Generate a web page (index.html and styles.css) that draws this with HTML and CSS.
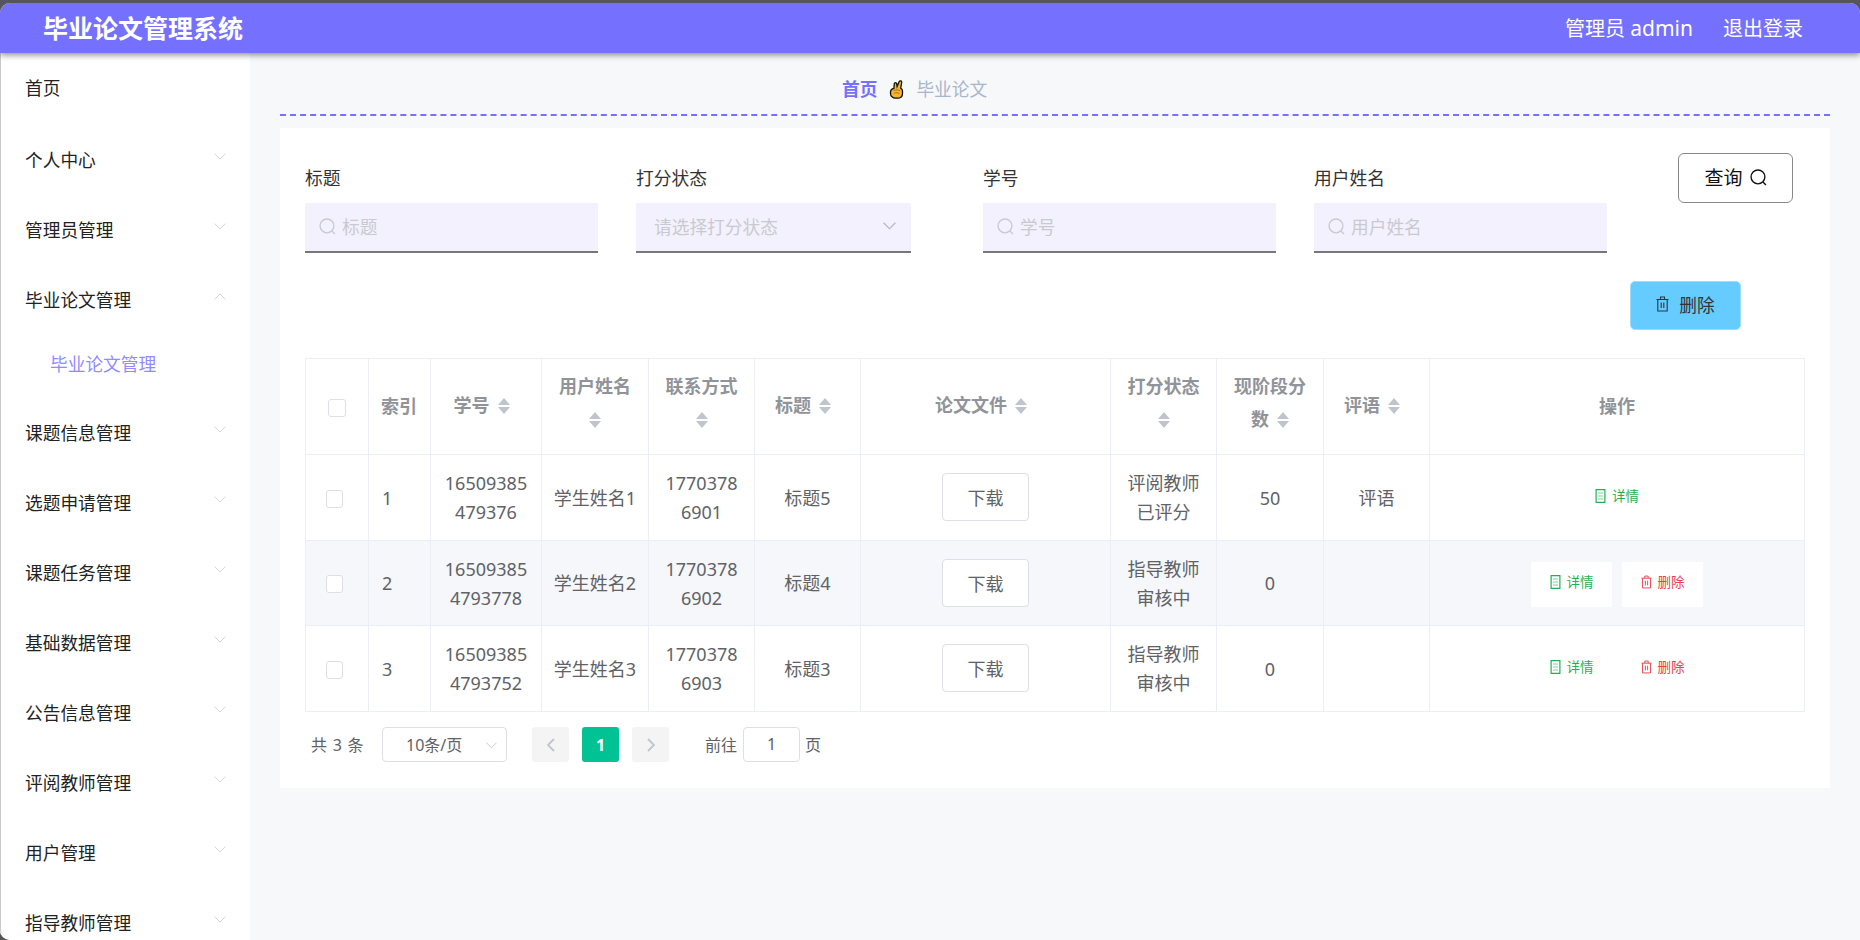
FILE: index.html
```html
<!DOCTYPE html>
<html lang="zh-CN">

<head>
    <meta charset="UTF-8">
    <title>毕业论文管理系统</title>
    <link rel="stylesheet" href="styles.css">
</head>

<body>
    <!-- shared icons -->
    <svg class="icon-defs" aria-hidden="true">
        <symbol id="i-search" viewBox="0 0 16 16">
            <circle cx="7.5" cy="7.5" r="6.5" fill="none" stroke="currentColor" stroke-width="1.3" />
            <path d="M12.2 12.2L15 15" fill="none" stroke="currentColor" stroke-width="1.3" />
        </symbol>
        <symbol id="i-down" viewBox="0 0 12 7">
            <path d="M0.5 0.5L6 6L11.5 0.5" fill="none" stroke="currentColor" stroke-width="1" />
        </symbol>
        <symbol id="i-trash" viewBox="0 0 13 16">
            <path d="M0.5 3.5H12.5M4.5 3.5V1H8.5V3.5M1.8 3.5V15H11.2V3.5M5.2 6.5V12M7.8 6.5V12" fill="none" stroke="currentColor" stroke-width="1.1" />
        </symbol>
        <symbol id="i-doc" viewBox="0 0 10 14">
            <path d="M0.6 0.6H9.4V13.4H0.6Z" fill="none" stroke="currentColor" stroke-width="1.2" />
            <path d="M2.5 4H7.5M2.5 7H7.5M2.5 10H7.5" fill="none" stroke="currentColor" stroke-width="1" opacity="0.6" />
        </symbol>
    </svg>

    <div class="app">
        <header class="topbar">
            <div class="logo">毕业论文管理系统</div>
            <div class="top-right">
                <span>管理员 <span class="top-name">admin</span></span>
                <span>退出登录</span>
            </div>
        </header>

        <div class="body-wrap">
            <aside class="sidebar">
                <div class="menu-item first">首页</div>
                <div class="menu-item">个人中心<svg class="arrow"><use href="#i-down" /></svg></div>
                <div class="menu-item">管理员管理<svg class="arrow"><use href="#i-down" /></svg></div>
                <div class="menu-item">毕业论文管理<svg class="arrow up"><use href="#i-down" /></svg></div>
                <div class="menu-sub">毕业论文管理</div>
                <div class="menu-item">课题信息管理<svg class="arrow"><use href="#i-down" /></svg></div>
                <div class="menu-item">选题申请管理<svg class="arrow"><use href="#i-down" /></svg></div>
                <div class="menu-item">课题任务管理<svg class="arrow"><use href="#i-down" /></svg></div>
                <div class="menu-item">基础数据管理<svg class="arrow"><use href="#i-down" /></svg></div>
                <div class="menu-item">公告信息管理<svg class="arrow"><use href="#i-down" /></svg></div>
                <div class="menu-item">评阅教师管理<svg class="arrow"><use href="#i-down" /></svg></div>
                <div class="menu-item">用户管理<svg class="arrow"><use href="#i-down" /></svg></div>
                <div class="menu-item">指导教师管理<svg class="arrow"><use href="#i-down" /></svg></div>
            </aside>

            <main class="content">
                <div class="breadcrumb">
                    <b>首页</b>
                    <svg class="hand" viewBox="0 0 14 19">
                        <path d="M4.4 8.4L4.8 3.6C5 2.2 7 2.2 7.2 3.6L7.6 6.6L9.6 1.8C10.2 0.4 12.4 0.8 12.2 2.4L11.2 8.2C12.4 8.8 13 9.8 13 11V13.4C13 16.4 10.8 18.2 7.8 18.2H6.2C3.2 18.2 1 16.2 1 13.4V12C1 10.2 2.6 8.8 4.4 8.4Z" fill="#f7b52c" stroke="#111" stroke-width="1.3" />
                        <path d="M4 10.6C6.2 9.6 8.8 9.6 10.8 10.8M4.4 13.2C6.4 12.4 8.6 12.6 10 13.6" fill="none" stroke="#9c6a12" stroke-width="0.9" />
                    </svg>
                    <span>毕业论文</span>
                </div>

                <section class="card">
                    <form class="search-row">
                        <div class="field">
                            <label>标题</label>
                            <div class="fake-input"><svg class="search-ic"><use href="#i-search" /></svg>标题</div>
                        </div>
                        <div class="field field-select">
                            <label>打分状态</label>
                            <div class="fake-input select-input">请选择打分状态<svg class="select-arrow"><use href="#i-down" /></svg></div>
                        </div>
                        <div class="field">
                            <label>学号</label>
                            <div class="fake-input"><svg class="search-ic"><use href="#i-search" /></svg>学号</div>
                        </div>
                        <div class="field">
                            <label>用户姓名</label>
                            <div class="fake-input"><svg class="search-ic"><use href="#i-search" /></svg>用户姓名</div>
                        </div>
                        <button type="button" class="query-btn"><span>查询</span><svg class="query-ic"><use href="#i-search" /></svg></button>
                    </form>

                    <div class="action-row">
                        <button type="button" class="del-btn"><svg class="del-ic"><use href="#i-trash" /></svg><span>删除</span></button>
                    </div>

                    <table class="data-table">
                        <colgroup>
                            <col class="c-check"><col class="c-index"><col class="c-wide"><col class="c-name"><col class="c-mid">
                            <col class="c-mid"><col class="c-file"><col class="c-mid"><col class="c-name"><col class="c-mid"><col class="c-op">
                        </colgroup>
                        <thead>
                            <tr>
                                <th><span class="check check-head"></span></th>
                                <th class="th-index">索引</th>
                                <th class="th-sort">学号<i class="sort"></i></th>
                                <th class="th-two">用户姓名<br><i class="sort sort-line"></i></th>
                                <th class="th-two">联系方式<br><i class="sort sort-line"></i></th>
                                <th class="th-sort">标题<i class="sort"></i></th>
                                <th class="th-sort">论文文件<i class="sort"></i></th>
                                <th class="th-two">打分状态<br><i class="sort sort-line"></i></th>
                                <th class="th-two">现阶段分<br>数<i class="sort"></i></th>
                                <th class="th-sort">评语<i class="sort"></i></th>
                                <th>操作</th>
                            </tr>
                        </thead>
                        <tbody>
                            <tr>
                                <td class="td-box"><span class="check"></span></td>
                                <td class="td-index">1</td>
                                <td>16509385<br>479376</td>
                                <td>学生姓名1</td>
                                <td>1770378<br>6901</td>
                                <td>标题5</td>
                                <td class="td-box"><button type="button" class="dl-btn">下载</button></td>
                                <td>评阅教师<br>已评分</td>
                                <td>50</td>
                                <td>评语</td>
                                <td class="td-box">
                                    <div class="ops">
                                        <span class="op op-green"><svg class="op-ic"><use href="#i-doc" /></svg>详情</span>
                                    </div>
                                </td>
                            </tr>
                            <tr class="row-hover">
                                <td class="td-box"><span class="check"></span></td>
                                <td class="td-index">2</td>
                                <td>16509385<br>4793778</td>
                                <td>学生姓名2</td>
                                <td>1770378<br>6902</td>
                                <td>标题4</td>
                                <td class="td-box"><button type="button" class="dl-btn">下载</button></td>
                                <td>指导教师<br>审核中</td>
                                <td>0</td>
                                <td></td>
                                <td class="td-box">
                                    <div class="ops">
                                        <span class="op op-green"><svg class="op-ic"><use href="#i-doc" /></svg>详情</span>
                                        <span class="op op-red"><svg class="op-ic"><use href="#i-trash" /></svg>删除</span>
                                    </div>
                                </td>
                            </tr>
                            <tr>
                                <td class="td-box"><span class="check"></span></td>
                                <td class="td-index">3</td>
                                <td>16509385<br>4793752</td>
                                <td>学生姓名3</td>
                                <td>1770378<br>6903</td>
                                <td>标题3</td>
                                <td class="td-box"><button type="button" class="dl-btn">下载</button></td>
                                <td>指导教师<br>审核中</td>
                                <td>0</td>
                                <td></td>
                                <td class="td-box">
                                    <div class="ops">
                                        <span class="op op-green"><svg class="op-ic"><use href="#i-doc" /></svg>详情</span>
                                        <span class="op op-red"><svg class="op-ic"><use href="#i-trash" /></svg>删除</span>
                                    </div>
                                </td>
                            </tr>
                        </tbody>
                    </table>

                    <div class="pager">
                        <span class="total">共 3 条</span>
                        <div class="page-size">10条/页<svg class="size-arrow"><use href="#i-down" /></svg></div>
                        <span class="page-btn"><svg class="chev" viewBox="0 0 8 14"><path d="M7 1L1 7L7 13" /></svg></span>
                        <span class="page-btn page-on">1</span>
                        <span class="page-btn"><svg class="chev" viewBox="0 0 8 14"><path d="M1 1L7 7L1 13" /></svg></span>
                        <span class="goto">前往</span>
                        <div class="page-input">1</div>
                        <span class="goto-end">页</span>
                    </div>
                </section>
            </main>
        </div>
    </div>
</body>

</html>
```

FILE: styles.css
```css
* {
    box-sizing: border-box;
    margin: 0;
    padding: 0;
    font-family: "Noto Sans", "Noto Sans CJK SC", sans-serif;
}

html,
body {
    height: 100%;
    overflow: hidden;
    background: #55555a;
}

body {
    padding-top: 3px;
}

.icon-defs {
    display: none;
}

.app {
    height: 937px;
    background: #f7f8fa;
    border-radius: 10px 10px 0 10px;
    overflow: hidden;
    display: flex;
    flex-direction: column;
}

.topbar {
    height: 50px;
    flex: none;
    background: #7670ff;
    color: #fff;
    display: flex;
    justify-content: space-between;
    align-items: center;
    padding: 0 57px 0 43px;
    box-shadow: 0 2px 6px rgba(0, 0, 0, 0.45);
    position: relative;
    z-index: 2;
}

.logo {
    font-size: 25px;
    font-weight: bold;
    line-height: 50px;
}

.top-right {
    display: flex;
    gap: 30px;
    font-size: 20px;
    line-height: 51px;
}

.top-name {
    font-size: 21px;
}

.body-wrap {
    flex: 1;
    display: flex;
    min-height: 0;
}

/* left menu */
.sidebar {
    width: 250px;
    flex: none;
    background: #fff;
    border-left: 1px solid #c9c9c9;
    overflow: hidden;
}

.menu-item {
    height: 70px;
    line-height: 70px;
    padding-left: 24px;
    font-size: 17.7px;
    color: #222;
    position: relative;
}

.menu-item.first {
    height: 72px;
}

.menu-sub {
    height: 66px;
    margin-top: -3px;
    line-height: 65px;
    padding-left: 49px;
    font-size: 17.7px;
    color: #918bff;
}

.arrow {
    position: absolute;
    right: 24px;
    top: 28px;
    width: 12px;
    height: 7px;
    color: #d5d8e4;
}

.arrow.up {
    transform: rotate(180deg);
}

/* main area */
.content {
    flex: 1;
    min-width: 0;
    padding: 0 30px;
}

.breadcrumb {
    height: 63px;
    border-bottom: 2px dashed #7670ff;
    display: flex;
    align-items: center;
    padding-left: 562px;
    padding-top: 10px;
    font-size: 17.7px;
    line-height: 26px;
    color: #a9b5cc;
}

.breadcrumb b {
    color: #7670ff;
}

.hand {
    width: 15px;
    height: 19px;
    margin: 2px 12px 0 12px;
}

.card {
    margin-top: 12px;
    background: #fff;
    padding: 25px 25px 25px 25px;
}

.search-row {
    display: flex;
    align-items: flex-end;
    height: 100px;
}

.field {
    width: 293px;
    margin-right: 38px;
}

.field-select {
    width: 275px;
    margin-right: 72px;
}

.field label {
    display: block;
    font-size: 17.8px;
    line-height: 26px;
    margin-bottom: 12px;
    color: #333;
}

.fake-input {
    height: 50px;
    background: #f3f1fd;
    border-bottom: 2px solid #777;
    display: flex;
    align-items: center;
    padding-left: 14px;
    padding-bottom: 2px;
    font-size: 17.7px;
    color: #c8cad0;
}

.search-ic {
    width: 17px;
    height: 17px;
    margin-right: 6px;
}

.select-input {
    padding-left: 18px;
    justify-content: space-between;
    padding-right: 15px;
}

.select-arrow {
    width: 13px;
    height: 8px;
    color: #b4b7c0;
}

.query-btn {
    align-self: flex-start;
    width: 115px;
    height: 50px;
    margin-left: 33px;
    background: #fff;
    border: 1px solid #888;
    border-radius: 6px;
    font-size: 19px;
    color: #111;
    display: flex;
    align-items: center;
    justify-content: center;
    gap: 7px;
    padding-bottom: 2px;
}

.query-ic {
    width: 17px;
    height: 17px;
}

.action-row {
    display: flex;
    justify-content: flex-end;
    padding-right: 64px;
    margin-top: 28px;
}

.del-btn {
    width: 111px;
    height: 49px;
    background: #66ccff;
    border: 1px solid #9fdcfb;
    border-radius: 5px;
    font-size: 17.7px;
    color: #333;
    display: flex;
    align-items: center;
    justify-content: center;
    gap: 10px;
    padding-bottom: 3px;
}

.del-ic {
    width: 13px;
    height: 16px;
}

/* table */
.data-table {
    width: 1500px;
    margin-top: 28px;
    table-layout: fixed;
    border-collapse: collapse;
    font-size: 18px;
    color: #606266;
}

.c-check {
    width: 63px;
}

.c-index {
    width: 62px;
}

.c-wide {
    width: 111px;
}

.c-name {
    width: 107px;
}

.c-mid {
    width: 106px;
}

.c-file {
    width: 250px;
}

.c-op {
    width: 375px;
}

.data-table th,
.data-table td {
    border: 1px solid #ebeef5;
    text-align: center;
    vertical-align: middle;
}

.data-table th {
    height: 96px;
    color: #909399;
    font-weight: bold;
    line-height: 33px;
}

.data-table .th-sort {
    padding-bottom: 2px;
}

.data-table .th-two {
    padding-bottom: 7px;
}

.data-table td {
    height: 85.5px;
    padding-top: 2px;
    line-height: 29px;
    white-space: nowrap;
}

.data-table .td-box {
    padding-top: 0;
}

.data-table .th-index {
    text-align: left;
    padding-left: 12px;
}

.data-table .td-index {
    text-align: left;
    padding-left: 13px;
}

.row-hover td {
    background: #f5f7fb;
}

.check {
    display: inline-block;
    width: 17px;
    height: 18px;
    background: #fff;
    border: 1px solid #dcdfe6;
    border-radius: 3px;
    vertical-align: middle;
    margin-right: 6px;
}

.check-head {
    width: 18px;
    margin-right: 1px;
}

.sort {
    display: inline-block;
    position: relative;
    width: 12px;
    height: 16px;
    margin-left: 8px;
    vertical-align: -2px;
}

.sort::before,
.sort::after {
    content: "";
    position: absolute;
    left: 0;
    border-left: 6px solid transparent;
    border-right: 6px solid transparent;
}

.sort::before {
    top: 0;
    border-bottom: 7px solid #c0c4cc;
}

.sort::after {
    bottom: 0;
    border-top: 7px solid #c0c4cc;
}

.th-sort .sort {
    margin-right: 9px;
}

.sort-line {
    margin-left: 0;
}

.dl-btn {
    display: block;
    width: 87px;
    height: 48px;
    margin: 0 auto;
    background: #fff;
    border: 1px solid #dcdfe6;
    border-radius: 4px;
    font-size: 18px;
    color: #606266;
}

.ops {
    display: flex;
    justify-content: center;
    gap: 10px;
}

.op {
    width: 81px;
    height: 45px;
    display: flex;
    align-items: center;
    justify-content: center;
    gap: 6px;
    font-size: 13.5px;
    line-height: 18px;
    margin-top: 4px;
    padding-bottom: 6px;
}

.row-hover .op {
    background: #fff;
}

.op-green {
    color: #1fb154;
}

.op-red {
    color: #e8404f;
}

.op-ic {
    width: 11px;
    height: 14px;
}

/* pagination */
.pager {
    display: flex;
    align-items: center;
    height: 36px;
    margin-top: 15px;
    padding-left: 6px;
    font-size: 16px;
    color: #606266;
}

.total {
    width: 71px;
    word-spacing: 1.5px;
    padding-bottom: 2px;
}

.page-size {
    width: 125px;
    height: 35px;
    border: 1px solid #dcdfe6;
    border-radius: 4px;
    display: flex;
    align-items: center;
    padding-left: 23px;
    padding-bottom: 2px;
    position: relative;
    margin-right: 25px;
}

.size-arrow {
    position: absolute;
    right: 9px;
    top: 14px;
    width: 11px;
    height: 7px;
    color: #c0c4cc;
}

.page-btn {
    width: 37px;
    height: 35px;
    background: #f4f4f5;
    border-radius: 3px;
    display: flex;
    align-items: center;
    justify-content: center;
    margin-right: 13px;
}

.page-on {
    background: #00c292;
    color: #fff;
    font-weight: bold;
}

.chev {
    width: 8px;
    height: 14px;
    fill: none;
    stroke: #c0c4cc;
    stroke-width: 1.8;
}

.goto {
    margin-left: 23px;
    margin-right: 6px;
    padding-bottom: 2px;
}

.page-input {
    width: 57px;
    height: 35px;
    border: 1px solid #dcdfe6;
    border-radius: 4px;
    text-align: center;
    line-height: 33px;
}

.goto-end {
    margin-left: 5px;
    padding-bottom: 2px;
}
```
